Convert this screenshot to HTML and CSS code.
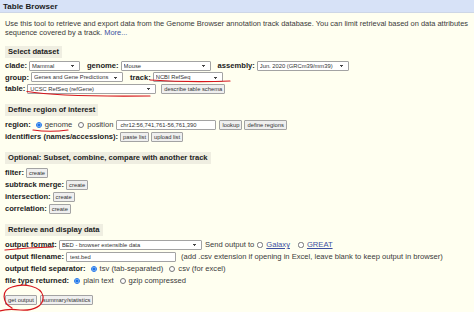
FILE: index.html
```html
<!DOCTYPE html>
<html lang="en">
<head>
    <meta charset="UTF-8">
    <title>Table Browser</title>
    <link rel="stylesheet" href="styles.css">
</head>
<body>
    <div class="titlebar">Table Browser</div>
    <div class="page">
        <p class="intro">
            <span class="line">Use this tool to retrieve and export data from the Genome Browser annotation track database. You can limit retrieval based on data attributes</span>
            <span class="line">sequence covered by a track. <a href="#" class="more">More...</a></span>
        </p>

        <!-- dataset -->
        <div class="section tight">
            <div class="section-title">Select dataset</div>
            <div class="row">
                <label class="lbl">clade:</label>
                <select class="ctl w-clade"><option>Mammal</option></select>
                <label class="lbl sp">genome:</label>
                <select class="ctl w-genome"><option>Mouse</option></select>
                <label class="lbl sp">assembly:</label>
                <select class="ctl w-assembly"><option>Jun. 2020 (GRCm39/mm39)</option></select>
            </div>
            <div class="row">
                <label class="lbl">group:</label>
                <select class="ctl w-group"><option>Genes and Gene Predictions</option></select>
                <label class="lbl sp">track:</label>
                <select class="ctl w-track"><option>NCBI RefSeq</option></select>
            </div>
            <div class="row">
                <label class="lbl">table:</label>
                <select class="ctl w-table"><option>UCSC RefSeq (refGene)</option></select>
                <button class="btn sp">describe table schema</button>
            </div>
        </div>

        <!-- region -->
        <div class="section">
            <div class="section-title">Define region of interest</div>
            <div class="row">
                <label class="lbl">region:</label>
                <input type="radio" name="region" class="radio" checked>
                <span class="txt">genome</span>
                <input type="radio" name="region" class="radio">
                <span class="txt">position</span>
                <input type="text" class="ctl field w-position" value="chr12:56,741,761-56,761,390">
                <button class="btn">lookup</button>
                <button class="btn">define regions</button>
            </div>
            <div class="row">
                <label class="lbl">identifiers (names/accessions):</label>
                <button class="btn">paste list</button>
                <button class="btn">upload list</button>
            </div>
        </div>

        <!-- subset -->
        <div class="section">
            <div class="section-title">Optional: Subset, combine, compare with another track</div>
            <div class="row"><label class="lbl">filter:</label><button class="btn">create</button></div>
            <div class="row"><label class="lbl">subtrack merge:</label><button class="btn">create</button></div>
            <div class="row"><label class="lbl">intersection:</label><button class="btn">create</button></div>
            <div class="row"><label class="lbl">correlation:</label><button class="btn">create</button></div>
        </div>

        <!-- output -->
        <div class="section">
            <div class="section-title">Retrieve and display data</div>
            <div class="row">
                <label class="lbl">output format:</label>
                <select class="ctl w-format"><option>BED - browser extensible data</option></select>
                <span class="txt">Send output to</span>
                <input type="checkbox" class="check">
                <a href="#" class="ext">Galaxy</a>
                <input type="checkbox" class="check sp-check">
                <a href="#" class="ext">GREAT</a>
            </div>
            <div class="row">
                <label class="lbl">output filename:</label>
                <input type="text" class="ctl field w-filename" value="test.bed">
                <span class="txt hint">(add .csv extension if opening in Excel, leave blank to keep output in browser)</span>
            </div>
            <div class="row">
                <label class="lbl">output field separator:</label>
                <input type="radio" name="sep" class="radio" checked>
                <span class="txt">tsv (tab-separated)</span>
                <input type="radio" name="sep" class="radio">
                <span class="txt">csv (for excel)</span>
            </div>
            <div class="row">
                <label class="lbl">file type returned:</label>
                <input type="radio" name="ftype" class="radio" checked>
                <span class="txt">plain text</span>
                <input type="radio" name="ftype" class="radio">
                <span class="txt">gzip compressed</span>
            </div>
            <div class="row actions">
                <button class="btn">get output</button>
                <button class="btn">summary/statistics</button>
            </div>
        </div>
    </div>

    <!-- hand-drawn red marks on top of the screenshot -->
    <svg class="marks" width="474" height="312" viewBox="0 0 474 312">
        <path d="M150 80 Q190 82.5 230 81"/>
        <path d="M27 91.5 Q60 97 150 96"/>
        <path d="M33 130 Q50 132.5 68 130"/>
        <path d="M5 250 Q28 247.5 53 247"/>
        <path d="M12 308 C2 303 1 290 12 287 C24 283 41 286 43 296 C44 306 34 311 20 310 C12 309 6 309 0 311"/>
    </svg>
</body>
</html>
```

FILE: styles.css
```css
:root {
    --page-bg: #fffff0;
    --title-bg: #d7e2f7;
    --section-bg: #efeee1;
    --text: #1c1c1c;
    --muted: #3a3a3a;
    --ctl-border: #a3a3a3;
    --link: #3c4fa0;
    --mark: #d6161d;
}

* {
    margin: 0;
    padding: 0;
    box-sizing: border-box;
}

html, body {
    width: 474px;
    height: 312px;
    overflow: hidden;
}

body {
    background: var(--page-bg);
    color: var(--text);
    font-family: 'Liberation Sans', Arial, sans-serif;
    font-size: 7.6px;
    position: relative;
}

.titlebar {
    height: 13px;
    line-height: 13px;
    padding-left: 3px;
    background: var(--title-bg);
    border-bottom: 1px solid #cdd6e6;
    font-size: 8px;
    font-weight: bold;
}

.page {
    padding-left: 5px;
}

.intro {
    margin-top: 6px;
    line-height: 9px;
    font-size: 7.45px;
    color: var(--muted);
    white-space: nowrap;
}

.intro .line {
    display: block;
}

.more {
    color: var(--link);
    text-decoration: none;
}

.section {
    margin-top: 9px;
}

.section-title {
    display: inline-block;
    height: 12px;
    line-height: 12px;
    padding: 0 3px;
    background: var(--section-bg);
    font-weight: bold;
    margin-bottom: 3px;
}

.tight .section-title {
    margin-bottom: 2px;
}

.row {
    display: flex;
    align-items: center;
    height: 12px;
    white-space: nowrap;
}

.tight .row {
    height: 11.5px;
}

.lbl {
    font-weight: bold;
    margin-right: 2px;
}

.lbl.sp {
    margin-left: 7px;
}

.txt {
    color: var(--muted);
    margin-right: 3px;
}

.hint {
    margin-left: 5px;
}

.ctl {
    height: 10px;
    font-family: inherit;
    font-size: 5.8px;
    color: #333;
    background-color: #fff;
    border: 1px solid var(--ctl-border);
    border-radius: 1px;
    padding: 0 1px;
    outline: none;
}

select.ctl {
    appearance: none;
    -webkit-appearance: none;
    padding: 0 8px 0 2px;
    background-image:
        linear-gradient(45deg, transparent 50%, #444 50%),
        linear-gradient(135deg, #444 50%, transparent 50%);
    background-position: calc(100% - 6px) 3.5px, calc(100% - 4px) 3.5px;
    background-size: 2px 2px;
    background-repeat: no-repeat;
}

.field {
    padding: 0 3px;
}

.w-clade { width: 51px; }
.w-genome { width: 90px; }
.w-assembly { width: 92px; }
.w-group { width: 92px; }
.w-track { width: 70px; }
.w-table { width: 129px; }
.w-position { width: 100px; margin: 0 3px 0 0; }
.w-format { width: 143px; margin-right: 3px; }
.w-filename { width: 110px; }

.btn {
    height: 10px;
    padding: 0 2px;
    font-family: inherit;
    font-size: 5.8px;
    color: #333;
    background: #efefef;
    border: 1px solid var(--ctl-border);
    border-radius: 1px;
    margin-right: 2px;
}

.btn.sp {
    margin-left: 5px;
}

.radio {
    width: 6px;
    height: 6px;
    margin: 0 3px 0 3px;
    accent-color: #1a73e8;
}

.check {
    width: 6px;
    height: 6px;
    margin: 0 3px 0 0;
}

.sp-check {
    margin-left: 8px;
}

.ext {
    color: var(--link);
}

.actions {
    margin-top: 8px;
    height: 10px;
}

.actions .btn {
    margin-right: 3px;
}

.marks {
    position: absolute;
    top: 0;
    left: 0;
    pointer-events: none;
}

.marks path {
    fill: none;
    stroke: var(--mark);
    stroke-width: 1.2;
    stroke-linecap: round;
}
```
